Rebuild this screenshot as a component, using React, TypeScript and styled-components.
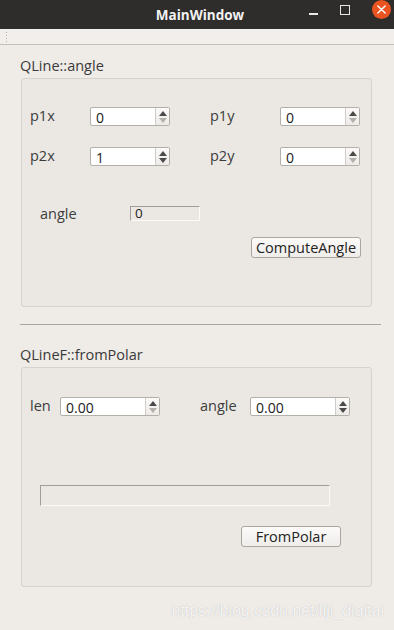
import * as React from 'react'
import styled, { createGlobalStyle } from 'styled-components'

const GlobalStyle = createGlobalStyle`
  html, body {
    margin: 0;
    padding: 0;
    background: #efebe7;
  }
  body {
    font-family: 'Open Sans', 'Noto Sans', 'DejaVu Sans', sans-serif;
    font-size: 14px;
    color: #3c3c3c;
  }
`

type SpinProps = {
  value: string
  width: number
  atMin?: boolean
}

const SpinBox = (props: SpinProps) => {
  const { value, width, atMin } = props
  return (
    <SpinFrame style={{ width }}>
      <SpinText>{value}</SpinText>
      <SpinButtons>
        <Arrow viewBox="0 0 8 5" width="8" height="5">
          <polygon points="4,0 8,5 0,5" fill="#4a4a4a" />
        </Arrow>
        <Arrow viewBox="0 0 8 5" width="8" height="5">
          <polygon points="0,0 8,0 4,5" fill={atMin ? '#b4b0ab' : '#4a4a4a'} />
        </Arrow>
      </SpinButtons>
    </SpinFrame>
  )
}

export default function App() {
  return (
    <Window>
      <GlobalStyle />
      <TitleBar>
        <Title>MainWindow</Title>
        <WindowButtons>
          <MinButton />
          <MaxButton />
          <CloseButton>
            <svg viewBox="0 0 10 10" width="9" height="9">
              <path d="M1 1 L9 9 M9 1 L1 9" stroke="#fff" strokeWidth="1.6" strokeLinecap="round" />
            </svg>
          </CloseButton>
        </WindowButtons>
      </TitleBar>
      <ToolBar>
        <Handle />
      </ToolBar>

      <Content>
        <SectionTitle>QLine::angle</SectionTitle>
        <GroupBox height={229}>
          <PointGrid>
            <FieldLabel>p1x</FieldLabel>
            <SpinBox value="0" width={80} atMin />
            <FieldLabel>p1y</FieldLabel>
            <SpinBox value="0" width={80} atMin />
            <FieldLabel>p2x</FieldLabel>
            <SpinBox value="1" width={80} />
            <FieldLabel>p2y</FieldLabel>
            <SpinBox value="0" width={80} atMin />
          </PointGrid>
          <ResultRow>
            <ResultLabel>angle</ResultLabel>
            <ReadOnlyEdit width={70} height={15}>0</ReadOnlyEdit>
          </ResultRow>
          <ButtonRow right={10} top={16}>
            <PushButton width={110}>ComputeAngle</PushButton>
          </ButtonRow>
        </GroupBox>

        <Separator />

        <SectionTitle>QLineF::fromPolar</SectionTitle>
        <GroupBox height={220}>
          <PolarRow>
            <PolarLabel width={30}>len</PolarLabel>
            <SpinBox value="0.00" width={100} atMin />
            <PolarLabel width={50} left={40}>angle</PolarLabel>
            <SpinBox value="0.00" width={100} />
          </PolarRow>
          <OutputEdit width={290} height={21} />
          <ButtonRow right={30} top={20}>
            <PushButton width={100}>FromPolar</PushButton>
          </ButtonRow>
        </GroupBox>
      </Content>

      <Watermark>https://blog.csdn.net/liji_digital</Watermark>
    </Window>
  )
}

const Window = styled.div`
  position: relative;
  width: 394px;
  height: 630px;
  overflow: hidden;
  background: #efebe7;
`

const TitleBar = styled.div`
  position: relative;
  height: 29px;
  background: #2e2d2b;
  display: flex;
  align-items: center;
  justify-content: center;
`

const Title = styled.div`
  color: #f2f2f2;
  font-weight: bold;
  font-size: 13.5px;
  padding-left: 6px;
`

const WindowButtons = styled.div`
  position: absolute;
  right: 3px;
  top: 2px;
  display: flex;
  align-items: center;
  gap: 22px;
`

const MinButton = styled.div`
  width: 9px;
  height: 2px;
  background: #e8e8e8;
  margin-top: 6px;
`

const MaxButton = styled.div`
  width: 8px;
  height: 8px;
  border: 1px solid #e8e8e8;
  margin-top: -2px;
`

const CloseButton = styled.div`
  width: 19px;
  height: 19px;
  border-radius: 50%;
  background: #e95420;
  display: flex;
  align-items: center;
  justify-content: center;
  margin-top: -2px;
`

const ToolBar = styled.div`
  height: 15px;
  border-bottom: 1px solid #c3bfba;
  background: #f1eeeb;
  display: flex;
  align-items: center;
  padding-left: 5px;
`

const Handle = styled.div`
  width: 3px;
  height: 11px;
  background-image: radial-gradient(circle, #b5b1ac 0.8px, transparent 1px);
  background-size: 3px 3px;
`

const Content = styled.div`
  display: flex;
  flex-direction: column;
  padding: 12px 13px 0 20px;
`

const SectionTitle = styled.div`
  font-size: 14.5px;
  line-height: 18px;
  color: #3a3a3a;
  margin-bottom: 3px;
`

const GroupBox = styled.div<{ height: number }>`
  box-sizing: border-box;
  height: ${p => p.height}px;
  width: 351px;
  margin-left: 1px;
  border: 1px solid #d6d2cd;
  border-radius: 3px;
  background: #ebe8e4;
  display: flex;
  flex-direction: column;
`

const PointGrid = styled.div`
  display: grid;
  grid-template-columns: 60px 80px 110px 80px;
  row-gap: 21px;
  padding: 28px 0 0 8px;
  align-items: center;

  & > :nth-child(3),
  & > :nth-child(7) {
    margin-left: 40px;
  }
`

const FieldLabel = styled.div`
  font-size: 14.5px;
  line-height: 19px;
  margin-top: -2px;
`

const SpinFrame = styled.div`
  box-sizing: border-box;
  height: 19px;
  display: flex;
  background: #fff;
  border: 1px solid #b3afa9;
  border-radius: 2px;
`

const SpinText = styled.div`
  flex: 1;
  font-size: 14px;
  line-height: 17px;
  padding-left: 5px;
  color: #222;
  margin-top: 1px;
`

const SpinButtons = styled.div`
  width: 13px;
  border-left: 1px solid #cfcbc6;
  background: linear-gradient(#fbfaf9, #edeae7);
  display: flex;
  flex-direction: column;
  align-items: center;
  justify-content: center;
  gap: 2px;
`

const Arrow = styled.svg`
  display: block;
`

const ResultRow = styled.div`
  display: flex;
  align-items: center;
  padding: 40px 0 0 18px;
`

const ResultLabel = styled.div`
  width: 90px;
  font-size: 14.5px;
  line-height: 15px;
`

const ReadOnlyEdit = styled.div<{ width: number; height: number }>`
  box-sizing: border-box;
  width: ${p => p.width}px;
  height: ${p => p.height}px;
  border-top: 1px solid #a19d98;
  border-left: 1px solid #a19d98;
  border-right: 1px solid #fbfaf9;
  border-bottom: 1px solid #fbfaf9;
  font-size: 13.5px;
  line-height: 13px;
  padding-left: 4px;
  color: #222;
`

const OutputEdit = styled(ReadOnlyEdit)`
  margin: 69px 0 0 18px;
`

const ButtonRow = styled.div<{ right: number; top: number }>`
  display: flex;
  justify-content: flex-end;
  padding: ${p => p.top}px ${p => p.right}px 0 0;
`

const PushButton = styled.button<{ width: number }>`
  box-sizing: border-box;
  width: ${p => p.width}px;
  height: 21px;
  padding: 0;
  border: 1px solid #a9a59f;
  border-radius: 3px;
  background: linear-gradient(#fcfbfa, #efedea);
  font-family: 'Open Sans', 'Noto Sans', 'DejaVu Sans', sans-serif;
  font-size: 14.5px;
  line-height: 19px;
  color: #222;
`

const PolarRow = styled.div`
  display: flex;
  align-items: center;
  padding: 29px 0 0 8px;
`

const PolarLabel = styled.div<{ width: number; left?: number }>`
  width: ${p => p.width}px;
  margin-left: ${p => p.left || 0}px;
  font-size: 14.5px;
  line-height: 19px;
  margin-top: -3px;
`

const Separator = styled.div`
  height: 1px;
  width: 361px;
  background: #a9a59f;
  margin: 17px 0 21px 0;
`

const Watermark = styled.div`
  position: absolute;
  right: 10px;
  bottom: 10px;
  font-family: 'Liberation Sans', Arial, sans-serif;
  font-size: 16px;
  color: rgba(255, 255, 255, 0.85);
  text-shadow: 0 0 1px rgba(120, 120, 120, 0.45);
`
